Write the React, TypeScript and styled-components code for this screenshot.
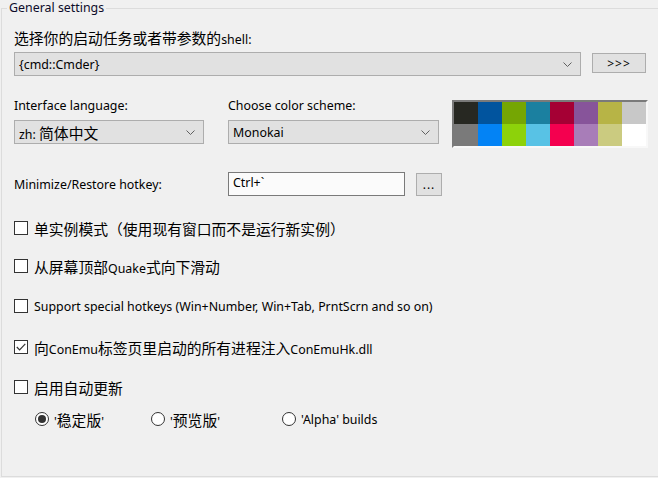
import React from "react";
import styled, { createGlobalStyle } from "styled-components";

const GlobalStyle = createGlobalStyle`
  html, body {
    margin: 0;
    padding: 0;
    background: #f0f0f0;
  }
  body {
    width: 658px;
    height: 478px;
    overflow: hidden;
    font-family: "Noto Sans", "Liberation Sans", "Noto Sans CJK SC", sans-serif;
    font-size: 12.4px;
    color: #000;
  }
`;

const Group = styled.fieldset`
  box-sizing: border-box;
  margin: 0 0 0 1px;
  width: 656px;
  height: 477px;
  padding: 0 12px 0 12px;
  border: 1px solid #dcdcdc;
`;

const Legend = styled.legend`
  padding: 0 2px;
  margin-left: -7px;
  line-height: 16px;
  color: #0c0c2a;
`;

const Cjk = styled.span`
  font-family: "Noto Sans CJK SC", sans-serif;
  font-size: 14.8px;
`;

const isCjk = (ch: string) => /[\u3000-\u9fff\uff00-\uffef]/.test(ch);

// wrap runs of Chinese characters so they render at the larger size used by the dialog
const Mixed: React.FC<{ text: string }> = ({ text }) => {
  const runs: { cjk: boolean; s: string }[] = [];
  for (const ch of text) {
    const c = isCjk(ch);
    const last = runs[runs.length - 1];
    if (last && last.cjk === c) last.s += ch;
    else runs.push({ cjk: c, s: ch });
  }
  return (
    <span>
      {runs.map((r, i) => (r.cjk ? <Cjk key={i}>{r.s}</Cjk> : <React.Fragment key={i}>{r.s}</React.Fragment>))}
    </span>
  );
};

const Label = styled.div<{ $top?: number }>`
  margin-top: ${(p) => p.$top ?? 0}px;
  height: 16px;
  line-height: 16px;
  white-space: nowrap;
`;

const Row = styled.div<{ $top?: number; $gap?: number; $height?: number }>`
  display: flex;
  align-items: flex-start;
  gap: ${(p) => p.$gap ?? 0}px;
  margin-top: ${(p) => p.$top ?? 0}px;
  height: ${(p) => (p.$height ? `${p.$height}px` : "auto")};
`;

const Column = styled.div<{ $width: number }>`
  display: flex;
  flex-direction: column;
  flex-shrink: 0;
  width: ${(p) => p.$width}px;
`;

const Combo = styled.div<{ $width: number; $top?: number }>`
  box-sizing: border-box;
  display: flex;
  align-items: center;
  flex-shrink: 0;
  width: ${(p) => p.$width}px;
  height: 24px;
  margin-top: ${(p) => p.$top ?? 0}px;
  padding: 0 8px 0 4px;
  background: #e1e1e1;
  border: 1px solid #adadad;
  white-space: nowrap;
`;

const ComboText = styled.span`
  flex: 1;
`;

const Chevron = () => (
  <svg width="9" height="5" viewBox="0 0 9 5">
    <polyline points="0.5,0.5 4.5,4.5 8.5,0.5" fill="none" stroke="#606060" strokeWidth="1" />
  </svg>
);

const Button = styled.div<{ $width: number; $height: number; $top?: number; $left?: number }>`
  box-sizing: border-box;
  display: flex;
  align-items: center;
  justify-content: center;
  flex-shrink: 0;
  width: ${(p) => p.$width}px;
  height: ${(p) => p.$height}px;
  margin-top: ${(p) => p.$top ?? 0}px;
  margin-left: ${(p) => p.$left ?? 0}px;
  background: #e1e1e1;
  border: 1px solid #adadad;
  font-size: 12px;
  letter-spacing: 1px;
`;

const Palette = styled.div`
  flex-shrink: 0;
  display: grid;
  grid-template-columns: repeat(8, 24px);
  grid-template-rows: repeat(2, 22px);
  border-style: solid;
  border-width: 2px;
  border-color: #7a7a7a #f8f8f8 #f8f8f8 #7a7a7a;
  margin-top: 2px;
`;

const Swatch = styled.div<{ $color: string }>`
  background: ${(p) => p.$color};
`;

const HotkeyBox = styled.div`
  box-sizing: border-box;
  width: 177px;
  height: 24px;
  padding: 0 4px;
  line-height: 20px;
  background: #fbfbfb;
  border: 1px solid #7a7a7a;
`;

const HotkeyRow = styled.div`
  display: flex;
  align-items: center;
  margin-top: 28px;
  height: 24px;
`;

const HotkeyLabel = styled.div`
  width: 214px;
`;

const CheckRow = styled.div<{ $top: number }>`
  display: flex;
  align-items: center;
  gap: 6px;
  height: 20px;
  margin-top: ${(p) => p.$top}px;
  white-space: nowrap;
`;

const Box = styled.div`
  box-sizing: border-box;
  width: 14px;
  height: 14px;
  border: 1px solid #333;
  background: #fff;
  display: flex;
  align-items: center;
  justify-content: center;
`;

const Check = () => (
  <svg width="10" height="8" viewBox="0 0 10 8">
    <polyline points="0.8,4 3.6,6.8 9.3,0.8" fill="none" stroke="#333" strokeWidth="1.2" />
  </svg>
);

const RadioRow = styled.div`
  display: flex;
  align-items: center;
  height: 20px;
  margin-top: 12px;
  padding-left: 21px;
  white-space: nowrap;
`;

const RadioItem = styled.div<{ $width?: number }>`
  display: flex;
  align-items: center;
  gap: 5px;
  width: ${(p) => (p.$width ? `${p.$width}px` : "auto")};
`;

const Radio = styled.div<{ $on?: boolean }>`
  box-sizing: border-box;
  width: 14px;
  height: 14px;
  border-radius: 50%;
  border: 1px solid #333;
  background: #fff;
  display: flex;
  align-items: center;
  justify-content: center;
  &::after {
    content: "";
    display: ${(p) => (p.$on ? "block" : "none")};
    width: 8px;
    height: 8px;
    border-radius: 50%;
    background: #333;
  }
`;

const palette = [
  "#272822", "#01549e", "#75a603", "#1b80a0", "#a50034", "#87549a", "#b7b446", "#c8c8c8",
  "#7a7a7a", "#0383f5", "#8dd20a", "#58c2e5", "#f4004f", "#a87db8", "#cbcb80", "#ffffff",
];

const checks = [
  { text: "单实例模式（使用现有窗口而不是运行新实例）", on: false, top: 22 },
  { text: "从屏幕顶部Quake式向下滑动", on: false, top: 18 },
  { text: "Support special hotkeys (Win+Number, Win+Tab, PrntScrn and so on)", on: false, top: 20 },
  { text: "向ConEmu标签页里启动的所有进程注入ConEmuHk.dll", on: true, top: 21 },
  { text: "启用自动更新", on: false, top: 20 },
];

export default function App() {
  return (
    <>
      <GlobalStyle />
      <Group>
        <Legend>General settings</Legend>
        <Label $top={14}>
          <Mixed text="选择你的启动任务或者带参数的shell:" />
        </Label>
        <Row $top={6} $gap={11}>
          <Combo $width={567}>
            <ComboText>{"{cmd::Cmder}"}</ComboText>
            <Chevron />
          </Combo>
          <Button $width={54} $height={20} $top={1}>
            &gt;&gt;&gt;
          </Button>
        </Row>
        <Row $top={22} $height={46}>
          <Column $width={214}>
            <Label>Interface language:</Label>
            <Combo $width={190} $top={6}>
              <ComboText>
                <Mixed text="zh: 简体中文" />
              </ComboText>
              <Chevron />
            </Combo>
          </Column>
          <Column $width={224}>
            <Label>Choose color scheme:</Label>
            <Combo $width={211} $top={6}>
              <ComboText>Monokai</ComboText>
              <Chevron />
            </Combo>
          </Column>
          <Palette>
            {palette.map((c) => (
              <Swatch key={c} $color={c} />
            ))}
          </Palette>
        </Row>
        <HotkeyRow>
          <HotkeyLabel>Minimize/Restore hotkey:</HotkeyLabel>
          <HotkeyBox>Ctrl+`</HotkeyBox>
          <Button $width={26} $height={23} $left={11}>
            ...
          </Button>
        </HotkeyRow>
        {checks.map((c) => (
          <CheckRow key={c.text} $top={c.top}>
            <Box>{c.on && <Check />}</Box>
            <Mixed text={c.text} />
          </CheckRow>
        ))}
        <RadioRow>
          <RadioItem $width={116}>
            <Radio $on />
            <Mixed text="'稳定版'" />
          </RadioItem>
          <RadioItem $width={131}>
            <Radio />
            <Mixed text="'预览版'" />
          </RadioItem>
          <RadioItem>
            <Radio />
            <span>'Alpha' builds</span>
          </RadioItem>
        </RadioRow>
      </Group>
    </>
  );
}
